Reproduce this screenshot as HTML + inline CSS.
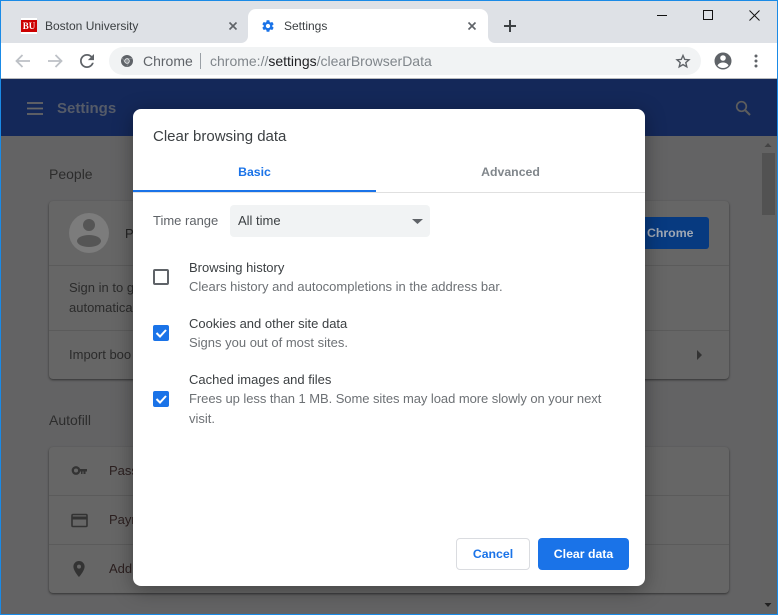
<!DOCTYPE html>
<html><head><meta charset="utf-8"><style>
*{box-sizing:border-box}
html,body{margin:0;padding:0;width:778px;height:615px;overflow:hidden;background:#636364;font-family:"Liberation Sans",sans-serif}
.a{position:absolute;white-space:nowrap}
.t{position:absolute;white-space:nowrap;font-size:13px;line-height:16px}
svg{position:absolute;overflow:visible}
</style></head><body>
<!-- page beneath -->
<div class="a" style="left:0;top:79px;width:778px;height:57px;background:#142859"></div>
<div class="a" style="left:0;top:136px;width:778px;height:479px;background:#636364"></div>
<div class="a" style="left:761px;top:136px;width:17px;height:479px;background:#636363"></div>
<div class="a" style="left:762px;top:153px;width:13px;height:62px;background:#525252"></div>
<svg style="left:0;top:0" width="778" height="615"><path d="M764.500 147l3.500-4 3.500 4z" fill="#444"/><path d="M764.500 603h7l-3.500 4z" fill="#222"/></svg>
<svg style="left:0;top:0" width="778" height="615"><path d="M27 103h16M27 108.500h16M27 114h16" stroke="#666" stroke-width="1.800"/><circle cx="741.500" cy="106.500" r="4.800" fill="none" stroke="#5d5d5d" stroke-width="1.700"/><path d="M745 110l5 5" stroke="#5d5d5d" stroke-width="2"/></svg>
<div class="t" style="left:57px;top:100px;font-size:15px;line-height:18px;font-weight:bold;color:#555b68">Settings</div>
<div class="t" style="left:49px;top:166px;font-size:14px;color:#2c2c2c">People</div>
<div class="a" style="left:49px;top:201px;width:680px;height:178px;background:#666;border-radius:4px;box-shadow:0 1px 2px rgba(0,0,0,.5)"></div>
<div class="a" style="left:49px;top:265px;width:680px;height:1px;background:#5b5b5b"></div>
<div class="a" style="left:49px;top:330px;width:680px;height:1px;background:#5b5b5b"></div>
<svg style="left:0;top:0" width="778" height="615"><circle cx="89" cy="233" r="20" fill="#7c7c7c"/><circle cx="89" cy="225" r="6" fill="#555"/><ellipse cx="89" cy="241" rx="12" ry="6" fill="#555"/></svg>
<div class="t" style="left:125px;top:226px;color:#222">P</div>
<div class="t" style="left:69px;top:280px;color:#2b2b2b">Sign in to g</div>
<div class="t" style="left:69px;top:300px;color:#2b2b2b">automatica</div>
<div class="t" style="left:69px;top:347px;color:#2b2b2b">Import boo</div>
<div class="a" style="left:620px;top:217px;width:89px;height:32px;background:#073a80;border-radius:3px"></div>
<div class="t" style="left:647px;top:225px;font-size:12.300px;font-weight:bold;color:#a0a8b4">Chrome</div>
<svg style="left:0;top:0" width="778" height="615"><path d="M697 350l5 5-5 5zM697 466l5 5-5 5zM697 515l5 5-5 5zM697 564l5 5-5 5z" fill="#333"/></svg>
<div class="t" style="left:49px;top:412px;font-size:14px;color:#2c2c2c">Autofill</div>
<div class="a" style="left:49px;top:447px;width:680px;height:146px;background:#666;border-radius:4px;box-shadow:0 1px 2px rgba(0,0,0,.5)"></div>
<div class="a" style="left:49px;top:495px;width:680px;height:1px;background:#5b5b5b"></div>
<div class="a" style="left:49px;top:544px;width:680px;height:1px;background:#5b5b5b"></div>
<svg style="left:0;top:0" width="778" height="615" fill="#333">
<circle cx="76" cy="470.500" r="3.200" fill="none" stroke="#333" stroke-width="2.300"/><path d="M79 469h8v2.500h-1.500v2.500h-2v-2.500h-1v2.500h-1.500v-2.500h-2z"/>
<rect x="72" y="514.500" width="15" height="12" rx="1" fill="none" stroke="#333" stroke-width="1.600"/><rect x="72" y="516.500" width="15" height="3"/>
<path d="M79 561a5.600 5.600 0 0 0-5.600 5.600c0 4.200 5.600 10.400 5.600 10.400s5.600-6.200 5.600-10.400A5.600 5.600 0 0 0 79 561zm0 7.600a2 2 0 1 1 0-4 2 2 0 0 1 0 4z"/></svg>
<div class="t" style="left:109px;top:463px;color:#2b1f1f">Pass</div>
<div class="t" style="left:109px;top:512px;color:#2b1f1f">Payr</div>
<div class="t" style="left:109px;top:561px;color:#2b1f1f">Add</div>
<!-- browser chrome -->
<div class="a" style="left:0;top:0;width:778px;height:43px;background:#dee1e6"></div>
<div class="a" style="left:248px;top:9px;width:240px;height:34px;background:#fff;border-radius:8px 8px 0 0"></div>
<svg style="left:0;top:0" width="778" height="43"><path d="M241 43a7 7 0 0 0 7-7v7zM488 36a7 7 0 0 0 7 7h-7z" fill="#fff"/></svg>
<div class="a" style="left:21px;top:18px;width:16px;height:16px;background:#fff"></div>
<div class="a" style="left:21px;top:20px;width:16px;height:12px;background:#cc0000;color:#fff;font:bold 9px/12px 'Liberation Serif',serif;text-align:center">BU</div>
<div class="t" style="left:45px;top:18px;font-size:12px;color:#3c4043">Boston University</div>
<div class="t" style="left:284px;top:18px;font-size:12px;color:#3c4043">Settings</div>
<svg style="left:0;top:0" width="778" height="79">
<path d="M229.500 22.500l7 7M236.500 22.500l-7 7M468.500 22.500l7 7M475.500 22.500l-7 7" stroke="#5f6368" stroke-width="1.600"/>
<path d="M510 20v12M504 26h12" stroke="#3c4043" stroke-width="2"/>
<path transform="translate(260.800 18.800) scale(.6)" fill="#1a73e8" d="M19.140 12.940c.04-.3.060-.61.060-.94 0-.32-.02-.64-.07-.94l2.030-1.580c.18-.14.230-.41.120-.61l-1.920-3.320c-.12-.22-.37-.29-.59-.22l-2.390.96c-.5-.38-1.030-.7-1.620-.94l-.36-2.540c-.04-.24-.24-.41-.48-.41h-3.840c-.24 0-.43.170-.47.410l-.36 2.540c-.59.240-1.130.57-1.620.94l-2.390-.96c-.22-.08-.47 0-.59.220L2.740 8.870c-.12.21-.08.470.12.610l2.030 1.580c-.05.3-.09.630-.09.940s.02.640.07.940l-2.030 1.580c-.18.140-.23.410-.12.610l1.920 3.320c.12.220.37.290.59.220l2.390-.96c.5.380 1.030.7 1.620.94l.36 2.540c.05.240.24.410.48.410h3.840c.24 0 .44-.17.470-.41l.36-2.540c.59-.24 1.130-.56 1.620-.94l2.390.96c.22.080.47 0 .59-.22l1.920-3.320c.12-.22.070-.47-.12-.61l-2.010-1.580zM12 15.600c-1.980 0-3.600-1.620-3.600-3.600s1.620-3.600 3.600-3.600 3.600 1.620 3.600 3.600-1.620 3.600-3.600 3.600z"/>
<path d="M657 15.500h10" stroke="#111" stroke-width="1"/>
<rect x="703.500" y="10.500" width="9" height="9" fill="none" stroke="#111"/>
<path d="M749.500 10.500l10 10M759.500 10.500l-10 10" stroke="#111" stroke-width="1"/>
</svg>
<div class="a" style="left:0;top:43px;width:778px;height:36px;background:#fff;border-bottom:1px solid #b8babd"></div>
<div class="a" style="left:109px;top:47px;width:592px;height:28px;background:#f1f3f4;border-radius:14px"></div>
<svg style="left:0;top:0" width="778" height="79">
<path d="M30 61H17M22.500 55l-6 6 6 6" fill="none" stroke="#bdc1c6" stroke-width="1.800"/>
<path d="M48 61h13M55.500 55l6 6-6 6" fill="none" stroke="#bdc1c6" stroke-width="1.800"/>
<path transform="translate(76.500 50.500) scale(.875)" fill="#5f6368" d="M17.650 6.350C16.200 4.900 14.210 4 12 4c-4.420 0-7.990 3.580-7.990 8s3.570 8 7.990 8c3.730 0 6.840-2.550 7.730-6h-2.080c-.82 2.330-3.040 4-5.650 4-3.310 0-6-2.690-6-6s2.690-6 6-6c1.660 0 3.140.69 4.220 1.780L13 11h7V4l-2.350 2.350z"/>
<circle cx="127" cy="61" r="6" fill="#5f6368"/><path d="M127 58.500h5M124.800 62.200l-2.500-4.300M129.200 62.200l-2.500 4.300" stroke="#8a8e92" stroke-width=".8"/><circle cx="127" cy="61" r="2.300" fill="#8a8e92" stroke="#f1f3f4" stroke-width=".8"/>
<path d="M683 55.500l1.700 3.900 4.300.4-3.200 2.800 1 4.200-3.800-2.200-3.800 2.200 1-4.200-3.200-2.800 4.300-.4z" fill="none" stroke="#5f6368" stroke-width="1.400"/>
<circle cx="723" cy="61" r="8.500" fill="#5f6368"/><circle cx="723" cy="58" r="2.800" fill="#fff"/><path d="M717.500 65.500c1-2.200 3.500-3 5.500-3s4.500.8 5.500 3c-1.300 1.600-3.300 2.500-5.500 2.500s-4.200-.9-5.500-2.500z" fill="#fff"/>
<circle cx="756" cy="56" r="1.500" fill="#5f6368"/><circle cx="756" cy="61" r="1.500" fill="#5f6368"/><circle cx="756" cy="66" r="1.500" fill="#5f6368"/>
</svg>
<div class="t" style="left:143px;top:53px;font-size:14px;color:#5f6368">Chrome</div>
<div class="a" style="left:200px;top:53px;width:1px;height:16px;background:#9aa0a6"></div>
<div class="t" style="left:210px;top:53px;font-size:14px;color:#80868b">chrome://<span style="color:#202124">settings</span>/clearBrowserData</div>
<!-- dialog -->
<div class="a" style="left:133px;top:109px;width:512px;height:477px;background:#fff;border-radius:8px;box-shadow:0 4px 20px rgba(0,0,0,.35)"></div>
<div class="t" style="left:153px;top:128px;font-size:15px;line-height:18px;color:#3c4043">Clear browsing data</div>
<div class="t" style="left:133px;top:164px;width:243px;text-align:center;font-weight:bold;font-size:12.300px;color:#1a73e8">Basic</div>
<div class="t" style="left:376px;top:164px;width:269px;text-align:center;font-weight:bold;font-size:12.300px;color:#80868b">Advanced</div>
<div class="a" style="left:133px;top:192px;width:512px;height:1px;background:#e0e0e0"></div>
<div class="a" style="left:133px;top:190px;width:243px;height:2px;background:#1a73e8"></div>
<div class="t" style="left:153px;top:213px;color:#5f6368">Time range</div>
<div class="a" style="left:230px;top:205px;width:200px;height:32px;background:#f1f3f4;border-radius:4px"></div>
<div class="t" style="left:238px;top:213px;color:#3c4043">All time</div>
<svg style="left:0;top:0" width="778" height="615"><path d="M412 219h11l-5.500 5z" fill="#5f6368"/></svg>
<div class="a" style="left:153px;top:269px;width:16px;height:16px;border:2px solid #5f6368;border-radius:2px"></div>
<div class="t" style="left:189px;top:260px;color:#3c4043">Browsing history</div>
<div class="t" style="left:189px;top:279px;color:#6d7175">Clears history and autocompletions in the address bar.</div>
<div class="a" style="left:153px;top:325px;width:16px;height:16px;background:#1a73e8;border-radius:2px"></div>
<div class="t" style="left:189px;top:316px;color:#3c4043">Cookies and other site data</div>
<div class="t" style="left:189px;top:335px;color:#6d7175">Signs you out of most sites.</div>
<div class="a" style="left:153px;top:391px;width:16px;height:16px;background:#1a73e8;border-radius:2px"></div>
<div class="t" style="left:189px;top:372px;color:#3c4043">Cached images and files</div>
<div class="t" style="left:189px;top:391px;color:#6d7175;letter-spacing:-.057px">Frees up less than 1 MB. Some sites may load more slowly on your next</div>
<div class="t" style="left:189px;top:411px;color:#6d7175">visit.</div>
<svg style="left:0;top:0" width="778" height="615"><path d="M156.500 333l3.500 3.500 6-6.500M156.500 399l3.500 3.500 6-6.500" fill="none" stroke="#fff" stroke-width="2"/></svg>
<div class="a" style="left:456px;top:538px;width:74px;height:32px;background:#fff;border:1px solid #dadce0;border-radius:4px;color:#1a73e8;font-size:12.300px;font-weight:bold;line-height:30px;text-align:center">Cancel</div>
<div class="a" style="left:538px;top:538px;width:91px;height:32px;background:#1a73e8;border-radius:4px;color:#fff;font-size:12.300px;font-weight:bold;line-height:32px;text-align:center">Clear data</div>
<!-- window border -->
<div class="a" style="left:0;top:0;width:778px;height:615px;border:1px solid #1a8ae6"></div>
</body></html>
